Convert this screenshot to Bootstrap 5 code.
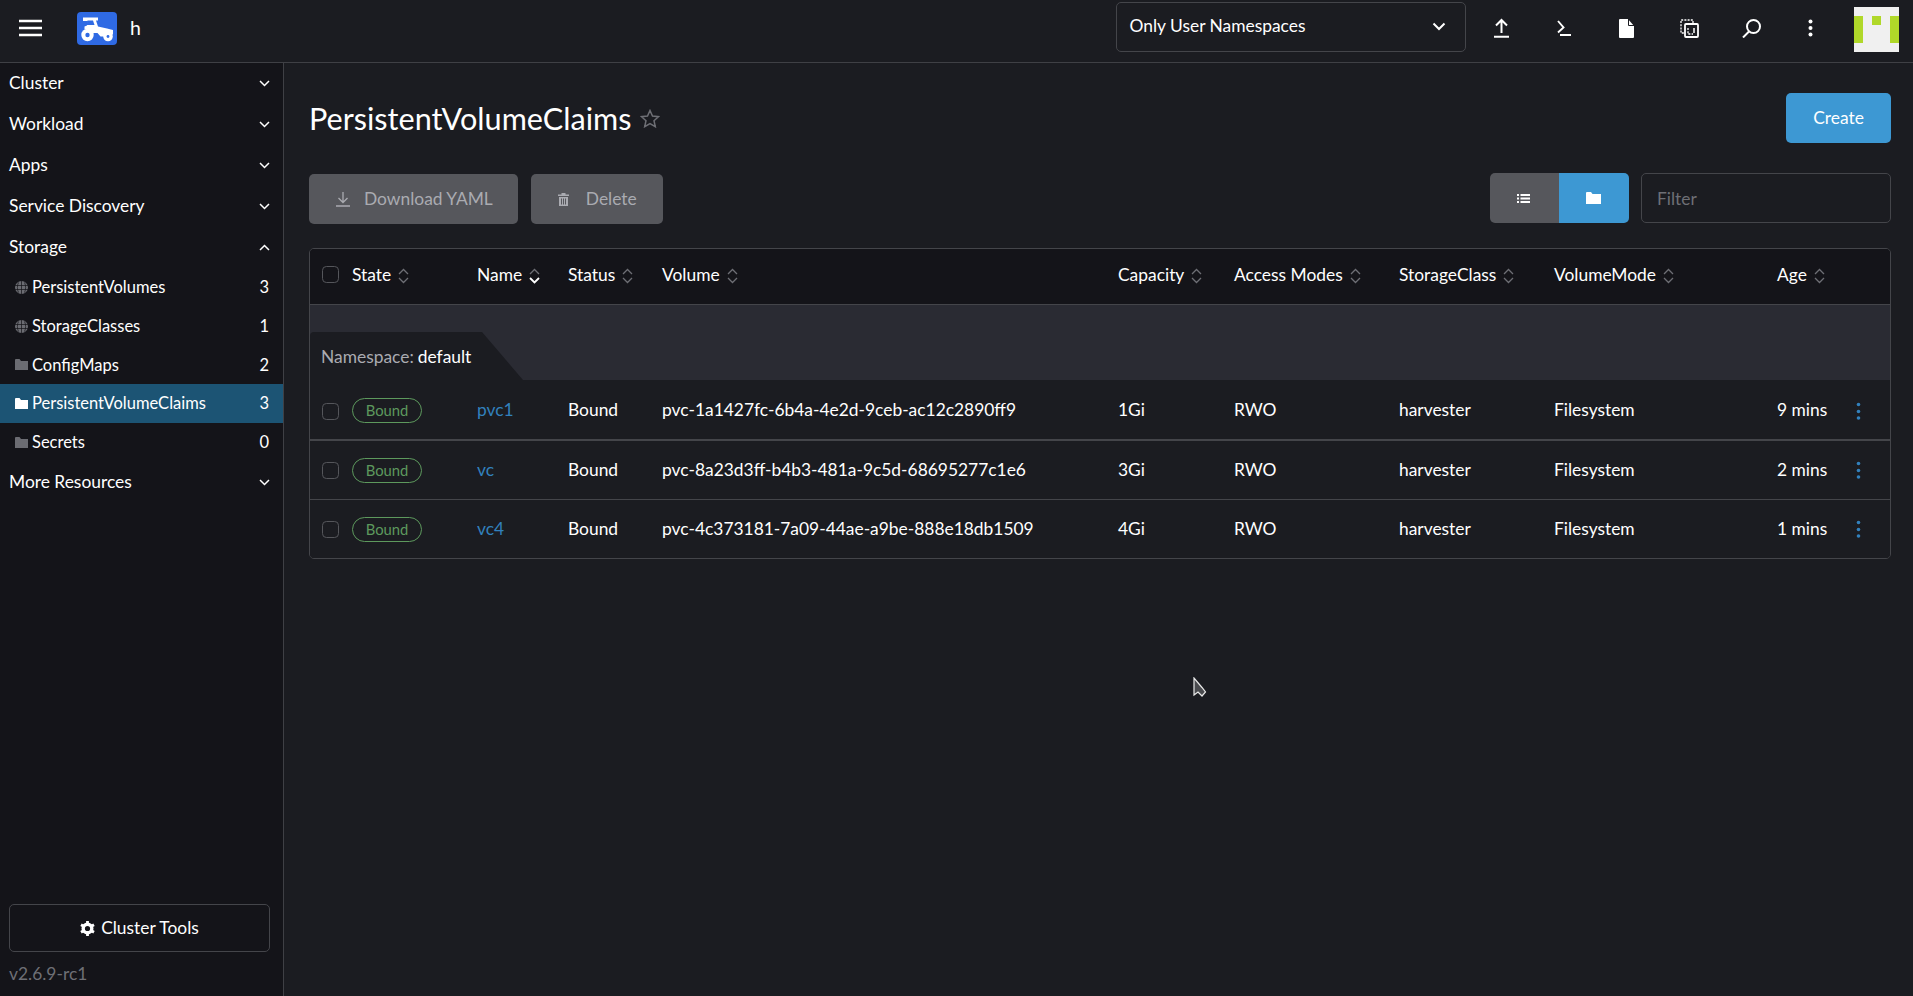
<!DOCTYPE html>
<html lang="en" data-bs-theme="dark">
<head>
<meta charset="utf-8">
<title>PersistentVolumeClaims</title>
<link href="https://cdn.jsdelivr.net/npm/bootstrap@5.3.0/dist/css/bootstrap.min.css" rel="stylesheet">
<style>
html,body{height:100%;overflow:hidden}
body{background:#1b1c21;color:#fff;font-family:Lato,"Liberation Sans",sans-serif;font-size:17.4px}
.app-shell{height:996px;display:flex;flex-direction:column;position:relative}
.top-bar{height:63px;flex:none;border-bottom:1px solid #3f4045;background:#1b1c21;padding:0 0 6px 19px}
.burger{width:23px;height:18px;margin-right:35px}
.logo-mark{width:40px;height:33px;margin-right:13px}
.cluster-name{font-size:19.500px}
.ns-select{width:350px;height:50px;margin-left:auto;border:1px solid #44454a;border-radius:5px;padding:0 13px 2px;font-size:17.400px;margin-top:-2px}
.ns-chev{margin-right:6px}
.tool-icon{position:relative;width:62.5px;display:flex;justify-content:center;color:#fff}
.tool-icon.is-last{width:54px}
.tool-row{margin:0 0 0 5px}
.avatar{width:45px;height:45px;margin:2px 14px 0 17px;display:block}
.body-row{flex:1;min-height:0}
.side-nav{width:284px;flex:none;background:#141419;border-right:1px solid #3f4045;display:flex;flex-direction:column}
.nav-top{height:41px;padding:0 9px;display:flex;align-items:center;justify-content:space-between;color:#fff;text-decoration:none;font-size:17.400px}
.nav-top svg{margin-right:4px}
.nav-kid{height:38.8px;padding:0 14px 0 15px;display:flex;align-items:center;color:#fff;text-decoration:none;font-size:16.500px}
.nav-kid svg{margin-right:4px;color:#6b6c72;flex:none}
.nav-kid .cnt{margin-left:auto}
.nav-kid.is-on{background:#1c5474}
.nav-kid.is-on svg{color:#fff}
.tools-btn{width:261px;margin:0 14px 0 9px;height:48px;border:1px solid #44454a;border-radius:5px;color:#fff;font-size:17.400px;display:flex;align-items:center;justify-content:center;gap:6px;--bs-btn-hover-color:#fff;--bs-btn-hover-bg:transparent;--bs-btn-hover-border-color:#44454a}
.ver{margin:11px 0 11px 9px;color:#6e6f75;font-size:17.400px;line-height:22px}
.work-area{flex:1;padding:30px 22px 0 25px;min-width:0}
.page-title{font-size:30.600px;font-weight:400;margin:0;line-height:50px;padding-top:2px}
.star-ic{margin-left:9px;color:#6e6f75}
.head-row{height:50px}
.act-row{height:50px;margin-top:31px;margin-bottom:24px}
.grey-btn{height:50px;background:#56575c;border:0;border-radius:5px;color:#aaabb1;font-size:17.400px;display:flex;align-items:center;padding:0 25px 0 27px;gap:14px;--bs-btn-disabled-bg:#56575c;--bs-btn-disabled-color:#aaabb1;--bs-btn-disabled-opacity:1}
.delete-btn{margin-left:13px;gap:17px;padding-right:26px}
.blue-btn{background:#3d98d3;color:#fff;border:0;border-radius:5px;height:50px;width:105px;font-size:17.400px;--bs-btn-hover-bg:#3d98d3;--bs-btn-hover-color:#fff}
.view-set{margin-top:-2px}
.view-btn{width:70px;height:50px;border:0;display:flex;align-items:center;justify-content:center;color:#fff;padding:0;--bs-btn-hover-color:#fff;--bs-btn-border-radius:5px}
.view-a{background:#56575c;--bs-btn-hover-bg:#56575c;padding-right:3px}
.view-b{background:#3d98d3;--bs-btn-hover-bg:#3d98d3;padding-right:2px}
.filter-box{width:250px;height:50px;margin-left:12px;background:#1b1c21;border:1px solid #44454a;border-radius:5px;color:#fff;font-size:17.400px;padding:0 15px;margin-top:-2px}
.filter-box::placeholder{color:#6e6f75}
.grid-wrap{border:1px solid #44454a;border-radius:5px;overflow:hidden;width:1582px}
.pvc-grid{table-layout:fixed;width:1580px;margin:0;--bs-table-bg:transparent;--bs-table-color:#fff;border-collapse:collapse}
.pvc-grid th,.pvc-grid td{padding:0;border:0;vertical-align:middle;font-weight:400;font-size:17.400px;white-space:nowrap;box-shadow:none;background:transparent;color:#fff}
.pvc-grid thead th{height:55px;background:#141419;border-bottom:1px solid #44454a;padding-bottom:3px}
.sort-ic{margin-left:7px;vertical-align:-3px;color:#6e6f75}
.grid-chk{width:17px;height:17px;margin:0 0 0 12px;display:block;background-color:transparent;border:1px solid #55565b;border-radius:4px}
.data-row .grid-chk{margin-top:2px}
.group-cell{height:76px;background:#2a2b33!important;vertical-align:bottom!important}
.ns-tab{width:213px;height:48px;background:#1b1c21;clip-path:polygon(0 0,172px 0,100% 100%,0 100%);border-top-left-radius:4px;padding:2px 0 0 11px;display:flex;align-items:center;color:#aaabb1}
.ns-tab span{color:#fff;margin-left:4px}
.data-row td{height:59px;background:#1b1c21;border-bottom:1px solid #44454a}
.pvc-grid .data-row.first td{height:60px;border-bottom-width:2px;padding-top:2px}
.data-row:last-child td{border-bottom:0}
.state-pill{display:inline-block;width:70px;height:25px;line-height:23px;border:1px solid #5d995d;border-radius:13px;color:#5d995d;font-size:14.800px;text-align:center}
.pvc-link{color:#3281bd;text-decoration:none}
.pvc-grid .age-cell{text-align:right;padding-right:1px}
.dots-ic{display:block;margin-left:29px;color:#3281bd}
.mouse-ic{position:absolute;left:1193px;top:677px}
</style>
</head>
<body>
<div class="app-shell">
  <header class="top-bar d-flex align-items-center">
    <svg class="burger" viewBox="0 0 23 18"><path d="M0 2h23M0 9h23M0 16h23" stroke="#fff" stroke-width="2.4"/></svg>
    <svg class="logo-mark" viewBox="0 0 40 33"><rect width="40" height="33" rx="4" fill="#2f6ae4"/>
      <path d="M6 5.500h15v2.900h-2l2 6.100 9 2 6 1.500v4l-2.500 2.500h-10l-3-3.500h-4.500c-2-3-6-4.500-8.500-3.500v-3l2.500-1 1-4.600H6z" fill="#fff"/>
      <path d="M10.500 8.400h5.500l1.500 4.600h-8z" fill="#2f6ae4"/>
      <circle cx="10.500" cy="23" r="6.200" fill="#fff"/><circle cx="10.500" cy="23" r="2.200" fill="#2f6ae4"/>
      <circle cx="31" cy="24.500" r="4.800" fill="#fff"/><circle cx="31" cy="24.500" r="1.400" fill="#2f6ae4"/></svg>
    <span class="cluster-name">h</span>
    <div class="ns-select d-flex align-items-center justify-content-between">
      <span>Only User Namespaces</span>
      <svg width="14" height="9" viewBox="0 0 14 9" class="ns-chev"><path d="M1.500 1.500 7 7l5.500-5.500" fill="none" stroke="#fff" stroke-width="2"/></svg>
    </div>
    <div class="tool-row d-flex align-items-center">
      <span class="tool-icon"><svg width="17" height="20" viewBox="0 0 17 20"><path d="M8.500 15V2M3 7.500 8.500 2 14 7.500M1 18.800h15" fill="none" stroke="#fff" stroke-width="2"/></svg></span>
      <span class="tool-icon"><svg width="14" height="16" viewBox="0 0 14 16"><path d="M1 1l5.500 6.500L1 12.500M3 15h11" fill="none" stroke="#fff" stroke-width="1.900"/></svg></span>
      <span class="tool-icon"><svg width="15" height="19" viewBox="0 0 15 19"><path d="M1 0h8l6 7v11a1 1 0 0 1-1 1H1a1 1 0 0 1-1-1V1a1 1 0 0 1 1-1z" fill="#fff"/><path d="M9.500 0v6.500H15" fill="none" stroke="#1b1c21" stroke-width="1"/></svg></span>
      <span class="tool-icon"><svg width="19" height="19" viewBox="0 0 19 19" fill="none" stroke="#fff"><path d="M13 4V1H1v13h3" stroke-dasharray="2 1.200" stroke-width="1.300"/><rect x="5" y="5" width="13" height="13" rx="1" stroke-width="1.800"/><path d="M8 9v6h5" stroke-dasharray="2 1.200" stroke-width="1.300"/><path d="M14 9v5" stroke-width="1.500"/></svg></span>
      <span class="tool-icon"><svg width="19" height="19" viewBox="0 0 19 19" fill="none" stroke="#fff" stroke-width="2"><circle cx="11.500" cy="7.500" r="6.500"/><path d="M7 12.500 1 18.500"/></svg></span>
      <span class="tool-icon is-last"><svg width="5" height="18" viewBox="0 0 5 18"><circle cx="2.500" cy="2.500" r="2" fill="#fff"/><circle cx="2.500" cy="9" r="2" fill="#fff"/><circle cx="2.500" cy="15.500" r="2" fill="#fff"/></svg></span>
    </div>
    <svg class="avatar" viewBox="0 0 5 5"><rect width="5" height="5" fill="#f0f0f0"/><path d="M0 1h1v3H0zM4 1h1v3H4zM2 1h1v1H2z" fill="#b0d829"/></svg>
  </header>

  <div class="body-row d-flex">
    <aside class="side-nav">
      <a class="nav-top" href="#">Cluster<svg width="11" height="7" viewBox="0 0 11 7"><path d="M1 1l4.500 4.500L10 1" fill="none" stroke="#fff" stroke-width="1.500"/></svg></a>
      <a class="nav-top" href="#">Workload<svg width="11" height="7" viewBox="0 0 11 7"><path d="M1 1l4.500 4.500L10 1" fill="none" stroke="#fff" stroke-width="1.500"/></svg></a>
      <a class="nav-top" href="#">Apps<svg width="11" height="7" viewBox="0 0 11 7"><path d="M1 1l4.500 4.500L10 1" fill="none" stroke="#fff" stroke-width="1.500"/></svg></a>
      <a class="nav-top" href="#">Service Discovery<svg width="11" height="7" viewBox="0 0 11 7"><path d="M1 1l4.500 4.500L10 1" fill="none" stroke="#fff" stroke-width="1.500"/></svg></a>
      <a class="nav-top" href="#">Storage<svg width="11" height="7" viewBox="0 0 11 7"><path d="M1 6l4.500-4.500L10 6" fill="none" stroke="#fff" stroke-width="1.500"/></svg></a>
      <a class="nav-kid" href="#"><svg width="13" height="13" viewBox="0 0 13 13"><circle cx="6.500" cy="6.500" r="6.500" fill="currentColor"/><path d="M0 4.500h13M0 8.500h13M6.500 0v13M3.500 1.500c-1.500 3-1.500 7 0 10M9.500 1.500c1.500 3 1.500 7 0 10" fill="none" stroke="#141419" stroke-width=".7"/></svg>PersistentVolumes<span class="cnt">3</span></a>
      <a class="nav-kid" href="#"><svg width="13" height="13" viewBox="0 0 13 13"><circle cx="6.500" cy="6.500" r="6.500" fill="currentColor"/><path d="M0 4.500h13M0 8.500h13M6.500 0v13M3.500 1.500c-1.500 3-1.500 7 0 10M9.500 1.500c1.500 3 1.500 7 0 10" fill="none" stroke="#141419" stroke-width=".7"/></svg>StorageClasses<span class="cnt">1</span></a>
      <a class="nav-kid" href="#"><svg width="13" height="11" viewBox="0 0 13 11"><path d="M0 1a1 1 0 0 1 1-1h3.500l1.500 2h7v9H0z" fill="currentColor"/></svg>ConfigMaps<span class="cnt">2</span></a>
      <a class="nav-kid is-on" href="#"><svg width="13" height="11" viewBox="0 0 13 11"><path d="M0 1a1 1 0 0 1 1-1h3.500l1.500 2h7v9H0z" fill="currentColor"/></svg>PersistentVolumeClaims<span class="cnt">3</span></a>
      <a class="nav-kid" href="#"><svg width="13" height="11" viewBox="0 0 13 11"><path d="M0 1a1 1 0 0 1 1-1h3.500l1.500 2h7v9H0z" fill="currentColor"/></svg>Secrets<span class="cnt">0</span></a>
      <a class="nav-top" href="#">More Resources<svg width="11" height="7" viewBox="0 0 11 7"><path d="M1 1l4.500 4.500L10 1" fill="none" stroke="#fff" stroke-width="1.500"/></svg></a>
      <div class="mt-auto">
        <button class="btn tools-btn" type="button"><svg width="15" height="15" viewBox="0 0 15 15"><circle cx="7.500" cy="7.500" r="4.300" fill="none" stroke="#fff" stroke-width="3.400"/><path d="M7.500 0v3M7.500 12v3M1 3.700l2.600 1.500M11.400 9.800l2.600 1.500M1 11.300l2.600-1.500M11.400 5.200 14 3.700" stroke="#fff" stroke-width="2.800"/></svg>Cluster Tools</button>
        <div class="ver">v2.6.9-rc1</div>
      </div>
    </aside>

    <main class="work-area">
      <div class="head-row d-flex align-items-center justify-content-between">
        <div class="d-flex align-items-center">
          <h1 class="page-title">PersistentVolumeClaims</h1>
          <svg class="star-ic" width="20" height="19" viewBox="0 0 20 19"><path d="M10 1.500l2.500 5.600 6 .6-4.500 4 1.300 6L10 14.600l-5.300 3.100 1.300-6-4.500-4 6-.6z" fill="none" stroke="currentColor" stroke-width="1.500"/></svg>
        </div>
        <button class="btn blue-btn" type="button">Create</button>
      </div>
      <div class="act-row d-flex align-items-center">
        <button class="btn grey-btn" disabled type="button"><svg width="14" height="15" viewBox="0 0 14 15"><path d="M7 0v10M2.500 6 7 10.500 11.500 6M0 14h14" fill="none" stroke="#aaabb1" stroke-width="1.300"/></svg>Download YAML</button>
        <button class="btn grey-btn delete-btn" disabled type="button"><svg width="11" height="13" viewBox="0 0 11 13"><path d="M0 1.500h11V3H0zM3.500 0h4v1.500h-4zM1 4h9v9H1z" fill="#aaabb1"/><path d="M3.500 5.500v6M5.500 5.500v6M7.500 5.500v6" stroke="#56575c"/></svg>Delete</button>
        <div class="btn-group view-set ms-auto" role="group">
          <button class="btn view-btn view-a" type="button"><svg width="13" height="11" viewBox="0 0 13 11"><path d="M0 1h2v2H0zM0 4.500h2v2H0zM0 8h2v2H0zM3.500 1H13v2H3.500zM3.500 4.500H13v2H3.500zM3.500 8H13v2H3.500z" fill="#fff"/></svg></button>
          <button class="btn view-btn view-b" type="button"><svg width="15" height="12" viewBox="0 0 15 12"><path d="M0 1a1 1 0 0 1 1-1h4l1.500 2H15v10H0z" fill="#fff"/></svg></button>
        </div>
        <input class="form-control filter-box" placeholder="Filter" type="text">
      </div>

      <div class="grid-wrap">
        <table class="table pvc-grid">
          <colgroup><col style="width:42px"><col style="width:125px"><col style="width:91px"><col style="width:94px"><col style="width:456px"><col style="width:116px"><col style="width:165px"><col style="width:155px"><col style="width:223px"><col style="width:50px"><col style="width:63px"></colgroup>
          <thead><tr>
            <th><input class="form-check-input grid-chk" type="checkbox"></th>
            <th>State<svg class="sort-ic" width="11" height="16" viewBox="0 0 11 16"><path d="M1 6l4.500-4.500L10 6M1 10l4.500 4.500L10 10" fill="none" stroke="currentColor" stroke-width="1.300"/></svg></th>
            <th>Name<svg class="sort-ic" width="11" height="16" viewBox="0 0 11 16"><path d="M1 6l4.500-4.500L10 6" fill="none" stroke="currentColor" stroke-width="1.300"/><path d="M1 10l4.500 4.500L10 10" fill="none" stroke="#fff" stroke-width="1.800"/></svg></th>
            <th>Status<svg class="sort-ic" width="11" height="16" viewBox="0 0 11 16"><path d="M1 6l4.500-4.500L10 6M1 10l4.500 4.500L10 10" fill="none" stroke="currentColor" stroke-width="1.300"/></svg></th>
            <th>Volume<svg class="sort-ic" width="11" height="16" viewBox="0 0 11 16"><path d="M1 6l4.500-4.500L10 6M1 10l4.500 4.500L10 10" fill="none" stroke="currentColor" stroke-width="1.300"/></svg></th>
            <th>Capacity<svg class="sort-ic" width="11" height="16" viewBox="0 0 11 16"><path d="M1 6l4.500-4.500L10 6M1 10l4.500 4.500L10 10" fill="none" stroke="currentColor" stroke-width="1.300"/></svg></th>
            <th>Access Modes<svg class="sort-ic" width="11" height="16" viewBox="0 0 11 16"><path d="M1 6l4.500-4.500L10 6M1 10l4.500 4.500L10 10" fill="none" stroke="currentColor" stroke-width="1.300"/></svg></th>
            <th>StorageClass<svg class="sort-ic" width="11" height="16" viewBox="0 0 11 16"><path d="M1 6l4.500-4.500L10 6M1 10l4.500 4.500L10 10" fill="none" stroke="currentColor" stroke-width="1.300"/></svg></th>
            <th>VolumeMode<svg class="sort-ic" width="11" height="16" viewBox="0 0 11 16"><path d="M1 6l4.500-4.500L10 6M1 10l4.500 4.500L10 10" fill="none" stroke="currentColor" stroke-width="1.300"/></svg></th>
            <th colspan="2">Age<svg class="sort-ic" width="11" height="16" viewBox="0 0 11 16"><path d="M1 6l4.500-4.500L10 6M1 10l4.500 4.500L10 10" fill="none" stroke="currentColor" stroke-width="1.300"/></svg></th>
          </tr></thead>
          <tbody>
            <tr><td class="group-cell" colspan="11"><div class="ns-tab">Namespace:<span>default</span></div></td></tr>
            <tr class="data-row first"><td><input class="form-check-input grid-chk" type="checkbox"></td><td><span class="state-pill">Bound</span></td><td><a class="pvc-link" href="#">pvc1</a></td><td>Bound</td><td>pvc-1a1427fc-6b4a-4e2d-9ceb-ac12c2890ff9</td><td>1Gi</td><td>RWO</td><td>harvester</td><td>Filesystem</td><td class="age-cell">9 mins</td><td><svg class="dots-ic" width="5" height="18" viewBox="0 0 5 18"><circle cx="2.500" cy="2.500" r="1.800" fill="currentColor"/><circle cx="2.500" cy="9.500" r="1.800" fill="currentColor"/><circle cx="2.500" cy="16" r="1.800" fill="currentColor"/></svg></td></tr>
            <tr class="data-row"><td><input class="form-check-input grid-chk" type="checkbox"></td><td><span class="state-pill">Bound</span></td><td><a class="pvc-link" href="#">vc</a></td><td>Bound</td><td>pvc-8a23d3ff-b4b3-481a-9c5d-68695277c1e6</td><td>3Gi</td><td>RWO</td><td>harvester</td><td>Filesystem</td><td class="age-cell">2 mins</td><td><svg class="dots-ic" width="5" height="18" viewBox="0 0 5 18"><circle cx="2.500" cy="2.500" r="1.800" fill="currentColor"/><circle cx="2.500" cy="9.500" r="1.800" fill="currentColor"/><circle cx="2.500" cy="16" r="1.800" fill="currentColor"/></svg></td></tr>
            <tr class="data-row"><td><input class="form-check-input grid-chk" type="checkbox"></td><td><span class="state-pill">Bound</span></td><td><a class="pvc-link" href="#">vc4</a></td><td>Bound</td><td>pvc-4c373181-7a09-44ae-a9be-888e18db1509</td><td>4Gi</td><td>RWO</td><td>harvester</td><td>Filesystem</td><td class="age-cell">1 mins</td><td><svg class="dots-ic" width="5" height="18" viewBox="0 0 5 18"><circle cx="2.500" cy="2.500" r="1.800" fill="currentColor"/><circle cx="2.500" cy="9.500" r="1.800" fill="currentColor"/><circle cx="2.500" cy="16" r="1.800" fill="currentColor"/></svg></td></tr>
          </tbody>
        </table>
      </div>
    </main>
  </div>
  <svg class="mouse-ic" width="14" height="21" viewBox="0 0 14 21"><path d="M1 1v17l4-3 4 4 3.500-4-3.500-4.500z" fill="#4a4b4f" stroke="#e8e8e8" stroke-width="1.200"/></svg>
</div>
</body>
</html>
